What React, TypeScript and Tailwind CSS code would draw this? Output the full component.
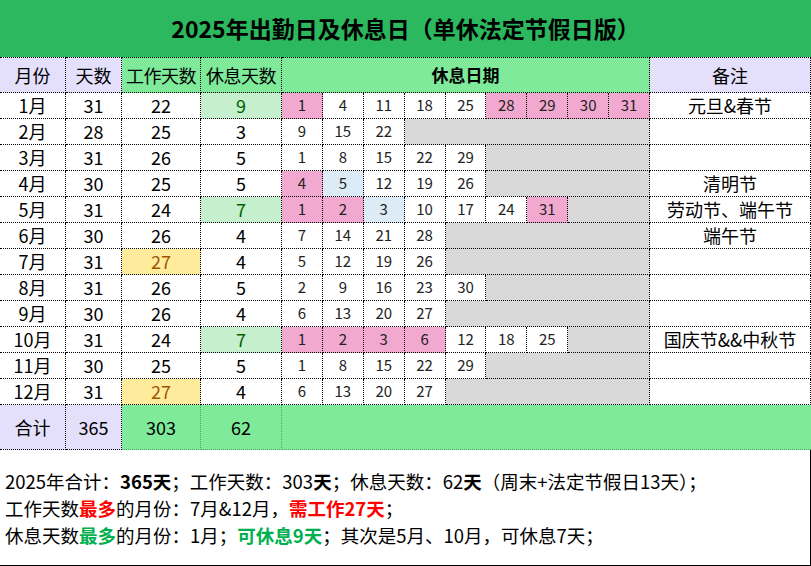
const FONT = { fontFamily: '"Noto Sans CJK SC", "Noto Sans", sans-serif' };

type DateCell = { d: number; c?: "p" | "b" };

type Row = {
  month: string;
  days: number;
  work: number;
  rest: number;
  workHi?: boolean;
  restHi?: boolean;
  dates: DateCell[];
  note?: string;
};

const p = (d: number): DateCell => ({ d, c: "p" });
const b = (d: number): DateCell => ({ d, c: "b" });
const n = (d: number): DateCell => ({ d });

const rows: Row[] = [
  { month: "1月", days: 31, work: 22, rest: 9, restHi: true, dates: [p(1), n(4), n(11), n(18), n(25), p(28), p(29), p(30), p(31)], note: "元旦&春节" },
  { month: "2月", days: 28, work: 25, rest: 3, dates: [n(9), n(15), n(22)] },
  { month: "3月", days: 31, work: 26, rest: 5, dates: [n(1), n(8), n(15), n(22), n(29)] },
  { month: "4月", days: 30, work: 25, rest: 5, dates: [p(4), b(5), n(12), n(19), n(26)], note: "清明节" },
  { month: "5月", days: 31, work: 24, rest: 7, restHi: true, dates: [p(1), p(2), b(3), n(10), n(17), n(24), p(31)], note: "劳动节、端午节" },
  { month: "6月", days: 30, work: 26, rest: 4, dates: [n(7), n(14), n(21), n(28)], note: "端午节" },
  { month: "7月", days: 31, work: 27, rest: 4, workHi: true, dates: [n(5), n(12), n(19), n(26)] },
  { month: "8月", days: 31, work: 26, rest: 5, dates: [n(2), n(9), n(16), n(23), n(30)] },
  { month: "9月", days: 30, work: 26, rest: 4, dates: [n(6), n(13), n(20), n(27)] },
  { month: "10月", days: 31, work: 24, rest: 7, restHi: true, dates: [p(1), p(2), p(3), p(6), n(12), n(18), n(25)], note: "国庆节&&中秋节" },
  { month: "11月", days: 30, work: 25, rest: 5, dates: [n(1), n(8), n(15), n(22), n(29)] },
  { month: "12月", days: 31, work: 27, rest: 4, workHi: true, dates: [n(6), n(13), n(20), n(27)] },
];

const cell = "flex items-center justify-center border-r border-b border-dotted border-black";

// grey filler spans, written out so tailwind sees the classes
const spanClass: Record<number, string> = {
  1: "col-span-1",
  2: "col-span-2",
  3: "col-span-3",
  4: "col-span-4",
  5: "col-span-5",
  6: "col-span-6",
};

function DateTd({ cellData }: { cellData: DateCell }) {
  const bg =
    cellData.c === "p" ? "bg-[#f2a9d0]" : cellData.c === "b" ? "bg-[#ddebf7]" : "bg-white";
  return <div className={`${cell} ${bg} h-[26px] text-[15px] text-[#222]`}>{cellData.d}</div>;
}

export default function App() {
  return (
    <div className="w-[811px] h-[566px] bg-white text-black overflow-hidden" style={FONT}>
      <div className="grid grid-cols-[66px_56px_79px_81px_repeat(9,minmax(0,1fr))_161px]">
        {/* title */}
        <div className="col-span-14 h-[57px] bg-[#2bb85e] flex items-center justify-center text-[23px] font-bold">
          2025年出勤日及休息日（单休法定节假日版）
        </div>

        {/* header */}
        <div className={`${cell} border-t h-[36px] bg-[#e4dffa] text-[18px]`}>月份</div>
        <div className={`${cell} border-t h-[36px] bg-[#e4dffa] text-[18px]`}>天数</div>
        <div className={`${cell} border-t h-[36px] bg-[#7eea9a] text-[18px] tracking-tight`}>工作天数</div>
        <div className={`${cell} border-t h-[36px] bg-[#7eea9a] text-[18px] tracking-tight`}>休息天数</div>
        <div className={`${cell} border-t h-[36px] bg-[#7eea9a] col-span-9 text-[17px] font-bold`}>休息日期</div>
        <div className={`${cell} border-t h-[36px] bg-[#e4dffa] text-[18px]`}>备注</div>

        {/* months */}
        {rows.map((r) => (
          <div key={r.month} className="contents">
            <div className={`${cell} h-[26px] text-[18px]`}>{r.month}</div>
            <div className={`${cell} h-[26px] text-[18px]`}>{r.days}</div>
            <div className={`${cell} h-[26px] text-[18px] ${r.workHi ? "bg-[#ffeb9c] text-[#9c5700]" : ""}`}>
              {r.work}
            </div>
            <div className={`${cell} h-[26px] text-[18px] ${r.restHi ? "bg-[#c6efce] text-[#006100]" : ""}`}>
              {r.rest}
            </div>
            {r.dates.map((d, i) => (
              <DateTd key={i} cellData={d} />
            ))}
            {r.dates.length < 9 && (
              <div className={`${cell} ${spanClass[9 - r.dates.length]} h-[26px] bg-[#d9d9d9]`} />
            )}
            <div className={`${cell} h-[26px] text-[18px]`}>{r.note ?? ""}</div>
          </div>
        ))}

        {/* total */}
        <div className="flex items-center justify-center h-[45px] bg-[#e4dffa] text-[18px] border-r border-b border-dotted border-black">
          合计
        </div>
        <div className="flex items-center justify-center h-[45px] bg-[#e4dffa] text-[18px] border-r border-b border-dotted border-black">
          365
        </div>
        <div className="flex items-center justify-center h-[45px] bg-[#7eea9a] text-[18px] border-r border-b border-dotted border-[#4aa860]">
          303
        </div>
        <div className="flex items-center justify-center h-[45px] bg-[#7eea9a] text-[18px] border-r border-b border-dotted border-[#4aa860]">
          62
        </div>
        <div className="col-span-10 h-[45px] bg-[#7eea9a] border-b border-dotted border-[#4aa860]" />
      </div>

      {/* summary */}
      <div className="h-[116px] border-r border-b border-black pl-[5px] pt-[18px] text-[18.5px] leading-[27px]">
        <div>
          2025年合计：<b>365天</b>；工作天数：303<b>天</b>；休息天数：62<b>天</b>（周末+法定节假日13天）；
        </div>
        <div>
          工作天数<b className="text-[#ff0000]">最多</b>的月份：7月&amp;12月，
          <b className="text-[#ff0000]">需工作27天</b>；
        </div>
        <div>
          休息天数<b className="text-[#00b050]">最多</b>的月份：1月；<b className="text-[#00b050]">可休息9天</b>
          ；其次是5月、10月，可休息7天；
        </div>
      </div>
    </div>
  );
}
